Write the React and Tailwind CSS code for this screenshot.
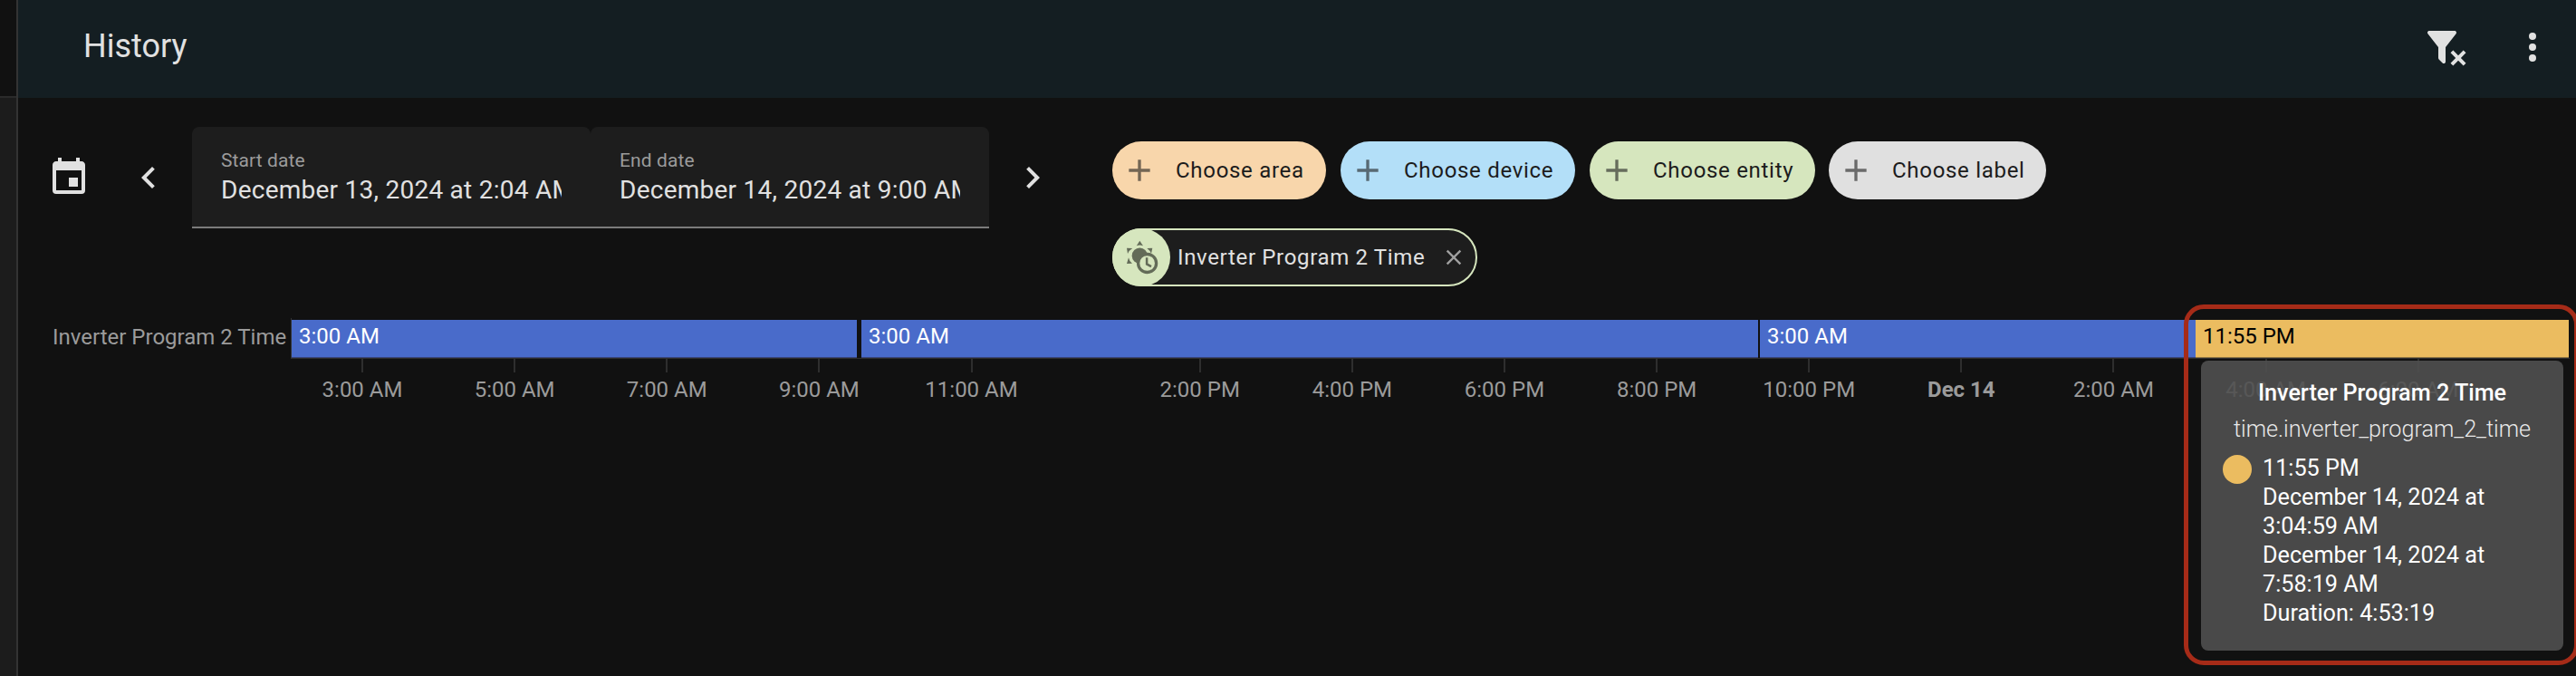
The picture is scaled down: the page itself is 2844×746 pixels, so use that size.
const ICONS = {
  calendar:
    "M19,19H5V8H19M16,1V3H8V1H6V3H5C3.89,3 3,3.89 3,5V19A2,2 0 0,0 5,21H19A2,2 0 0,0 21,19V5C21,3.89 20.1,3 19,3H18V1M17,12H12V17H17V12Z",
  left: "M15.41,16.58L10.83,12L15.41,7.41L14,6L8,12L14,18L15.41,16.58Z",
  right: "M8.59,16.58L13.17,12L8.59,7.41L10,6L16,12L10,18L8.59,16.58Z",
  plus: "M19,13H13V19H11V13H5V11H11V5H13V11H19V13Z",
  close:
    "M19,6.41L17.59,5L12,10.59L6.41,5L5,6.41L10.59,12L5,17.59L6.41,19L12,13.41L17.59,19L19,17.59L13.41,12L19,6.41Z",
  dots: "M12,16A2,2 0 0,1 14,18A2,2 0 0,1 12,20A2,2 0 0,1 10,18A2,2 0 0,1 12,16M12,10A2,2 0 0,1 14,12A2,2 0 0,1 12,14A2,2 0 0,1 10,12A2,2 0 0,1 12,10M12,4A2,2 0 0,1 14,6A2,2 0 0,1 12,8A2,2 0 0,1 10,6A2,2 0 0,1 12,4Z",
  filterRemove:
    "M14.76,20.83L17.6,18L14.76,15.17L16.17,13.76L19,16.57L21.83,13.76L23.24,15.17L20.43,18L23.24,20.83L21.83,22.24L19,19.4L16.17,22.24L14.76,20.83M12,12V19.88C12.04,20.18 11.94,20.5 11.71,20.71C11.32,21.1 10.69,21.1 10.3,20.71L8.29,18.7C8.06,18.47 7.96,18.16 8,17.87V12H7.97L2.21,4.62C1.87,4.19 1.95,3.56 2.38,3.22C2.57,3.08 2.78,3 3,3V3H17V3C17.22,3 17.43,3.08 17.62,3.22C18.05,3.56 18.13,4.19 17.79,4.62L12.03,12H12Z",
};

function Icon({ name, className }) {
  return (
    <svg viewBox="0 0 24 24" className={`shrink-0 fill-current ${className}`}>
      <path d={ICONS[name]} />
    </svg>
  );
}

function SunClock() {
  return (
    <svg viewBox="0 0 40 40" className="size-10 text-[#636b58]" fill="currentColor">
      <path d="M18.3 1.7 22 7.2Q18.3 6 14.8 7.2ZM4 9.8 10.2 10Q6.6 12.2 5 16ZM32.3 9.8 26.3 10Q29.6 12.2 31 16ZM6 20.3Q6.6 24 10 26.8L4 27Z" />
      <circle cx="18.3" cy="18.2" r="8.6" />
      <circle cx="26.6" cy="26.5" r="10" fill="#d6e6be" stroke="currentColor" strokeWidth="3.3" />
      <path d="M26.1 20.2V27.4L31 30.2" fill="none" stroke="currentColor" strokeWidth="2.5" />
    </svg>
  );
}

function DateField({ label, value }) {
  return (
    <div className="h-28 w-[440px] rounded-t-lg border-b-2 border-[#7b7b7b] bg-[#1d1d1d] px-8 pt-[22px]">
      <div className="h-[30px] text-[21px] leading-[30px] tracking-[0.1px] text-[#9b9b9b]">{label}</div>
      <div className="h-[36px] overflow-hidden whitespace-nowrap text-[28px] leading-[36px] tracking-[0.25px] text-[#e1e1e1]">
        {value}
      </div>
    </div>
  );
}

const CHOICES = [
  { label: "Choose area", style: "w-[236px] bg-[#f8d6ab] mr-4" },
  { label: "Choose device", style: "w-[259px] bg-[#b3dff8] mr-4" },
  { label: "Choose entity", style: "w-[249px] bg-[#d6e6be] mr-[15px]" },
  { label: "Choose label", style: "w-[240px] bg-[#e0e0e0]" },
];

const HOUR = 84.07;
const TICKS = [
  ["3:00 AM", 0],
  ["5:00 AM", 2],
  ["7:00 AM", 2],
  ["9:00 AM", 2],
  ["11:00 AM", 2],
  ["2:00 PM", 3],
  ["4:00 PM", 2],
  ["6:00 PM", 2],
  ["8:00 PM", 2],
  ["10:00 PM", 2],
  ["Dec 14", 2],
  ["2:00 AM", 2],
  ["4:00 AM", 2],
  ["6:00 AM", 2],
];

const BARS = [
  { label: "3:00 AM", style: "w-[624px] mr-[5px] bg-[#496bca] border-[#39447a] text-white" },
  { label: "3:00 AM", style: "w-[990px] mr-[2px] bg-[#496bca] border-[#39447a] text-white" },
  { label: "3:00 AM", style: "w-[481px] bg-[#496bca] border-[#39447a] text-white" },
  { label: "11:55 PM", style: "w-[412px] bg-[#ebbc60] border-[#8d7544] text-black" },
];

function Timeline() {
  return (
    <div className="mt-[35px] flex pl-[38px]">
      <div className="w-[263px] pt-1 text-2xl leading-[34px] whitespace-nowrap text-[#9b9b9b]">
        Inverter Program 2 Time
      </div>
      <div className="w-[2516px]">
        <div className="flex h-[45px] border-b border-l border-b-[#2e2e2e] border-l-[#333] pt-[2px]">
          {BARS.map((bar, i) => (
            <div
              key={i}
              className={`h-[42px] border-b pl-2 text-2xl leading-[37px] whitespace-nowrap ${bar.style}`}
            >
              {bar.label}
            </div>
          ))}
        </div>
        <div className="flex pl-[79px]">
          {TICKS.map(([label, hours], i) => (
            <div key={i} className="flex w-0 flex-col items-center" style={{ marginLeft: hours * HOUR }}>
              <div className="h-[15px] w-[2px] shrink-0 bg-[#2e2e2e]" />
              <div
                className={`mt-[3px] text-2xl leading-8 whitespace-nowrap text-[#9b9b9b] ${label === "Dec 14" ? "font-bold" : ""}`}
              >
                {label}
              </div>
            </div>
          ))}
        </div>
      </div>
    </div>
  );
}

function Tooltip() {
  return (
    <div className="absolute top-[398px] left-[2430px] h-80 w-[400px] rounded-lg bg-[#505050e6] pt-4 text-[25.2px] text-white">
      <div className="text-center leading-10 font-medium">Inverter Program 2 Time</div>
      <div className="text-center leading-[39px] font-light text-[#e8e8e8]">time.inverter_program_2_time</div>
      <div className="flex pt-2 pl-6">
        <div className="mt-px size-8 rounded-full bg-[#ebbc60]" />
        <div className="ml-3 w-[290px] leading-8">
          <div>11:55 PM</div>
          <div>December 14, 2024 at</div>
          <div>3:04:59 AM</div>
          <div>December 14, 2024 at</div>
          <div>7:58:19 AM</div>
          <div>Duration: 4:53:19</div>
        </div>
      </div>
    </div>
  );
}

export default function App() {
  return (
    <div className="relative flex h-[746px] w-[2844px] overflow-hidden bg-[#111] font-['Roboto',sans-serif]">
      <aside className="flex w-5 shrink-0 flex-col border-r-2 border-[#333] bg-[#1c1c1c]">
        <div className="h-[108px] border-b-2 border-[#2b2b2b] bg-[#111]" />
      </aside>
      <main className="flex grow flex-col">
        <header className="flex h-[108px] shrink-0 items-center bg-[#141e22] pr-6 pb-1 pl-[72px] text-[#e1e1e1]">
          <h1 className="-mt-[3px] grow text-4xl leading-[44px]">History</h1>
          <Icon name="filterRemove" className="size-12" />
          <Icon name="dots" className="ml-12 size-12" />
        </header>
        <div className="flex items-start pt-8 pl-8 text-[#e1e1e1]">
          <Icon name="calendar" className="mt-8 mr-10 size-12" />
          <Icon name="left" className="mt-8 mr-6 size-12" />
          <div className="flex">
            <DateField label="Start date" value="December 13, 2024 at 2:04 AM" />
            <DateField label="End date" value="December 14, 2024 at 9:00 AM" />
          </div>
          <Icon name="right" className="mt-8 ml-6 size-12" />
          <div className="ml-16 flex flex-col items-start gap-8 pt-4">
            <div className="flex">
              {CHOICES.map((choice) => (
                <button
                  key={choice.label}
                  className={`flex h-16 items-center rounded-full pl-[10px] text-2xl tracking-[0.7px] whitespace-nowrap text-[#1c1c1c] ${choice.style}`}
                >
                  <Icon name="plus" className="mr-5 size-10 opacity-60" />
                  {choice.label}
                </button>
              ))}
            </div>
            <div className="flex h-16 w-[403px] items-center rounded-full border-2 border-[#d6e6be] bg-[#1d1d1d] text-2xl tracking-[0.66px] whitespace-nowrap">
              <div className="-ml-0.5 flex size-16 shrink-0 items-center justify-center rounded-full bg-[#d6e6be]">
                <SunClock />
              </div>
              <span className="ml-2 grow">Inverter Program 2 Time</span>
              <Icon name="close" className="mr-[10px] size-7 text-[#a0a0a0]" />
            </div>
          </div>
        </div>
        <Timeline />
      </main>
      <Tooltip />
      <div className="absolute top-[336px] left-[2411px] h-[398px] w-[436px] rounded-[22px] border-[5px] border-[#a62b18]" />
    </div>
  );
}
